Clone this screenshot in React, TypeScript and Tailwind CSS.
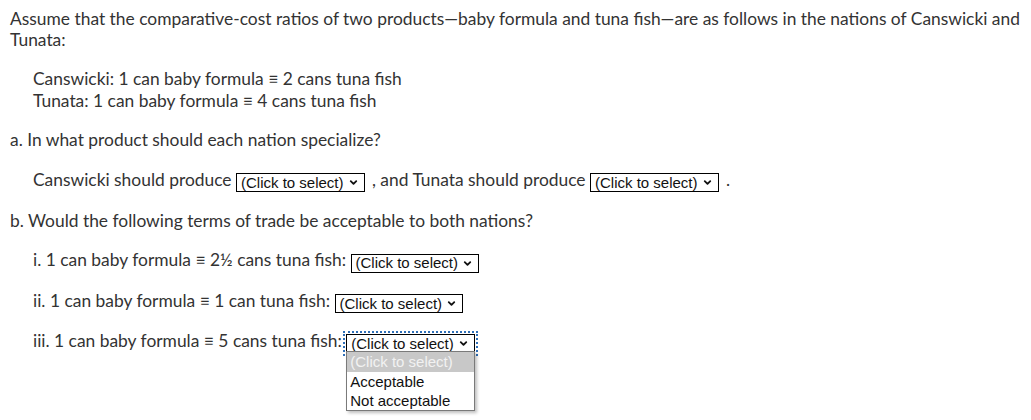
import { ChevronDown } from "lucide-react";

function Sel({ focused = false, open = false }: { focused?: boolean; open?: boolean }) {
  return (
    <span className="relative inline-block align-middle mr-[3px]">
      <span
        className={
          "inline-flex items-center gap-[4px] border border-black bg-white pl-[4px] pr-[5px] h-[19px] text-[15px] leading-[17px] text-[#111] font-['Liberation_Sans',Arial,sans-serif] " +
          (focused ? "outline-2 outline-dotted outline-[#2f6fb8] outline-offset-[1px]" : "")
        }
      >
        <span className="-mt-[1px]">(Click to select)</span>
        <ChevronDown className="w-[11px] h-[11px]" strokeWidth={4} />
      </span>
      {open && (
        <span className="absolute left-0 top-[19px] w-full flex flex-col border border-[#7a7a7a] bg-white shadow-[2px_2px_3px_rgba(0,0,0,0.25)] text-[15px] leading-[19px] text-[#111] font-['Liberation_Sans',Arial,sans-serif] z-10">
          <span className="bg-[#c8c8c8] text-[#f2f2f2] px-[3px] leading-[20px]">(Click to select)</span>
          <span className="px-[3px]">Acceptable</span>
          <span className="px-[3px]">Not acceptable</span>
        </span>
      )}
    </span>
  );
}

export default function App() {
  return (
    <div className="bg-white w-[1031px] h-[420px] px-[10px] pt-[8px] text-[17.4px] leading-[21px] text-[#333] font-['Lato',sans-serif]">
      <p>
        Assume that the comparative-cost ratios of two products—baby formula and tuna fish—are as follows in the nations of Canswicki and Tunata:
      </p>
      <div className="mt-[18px] pl-[23px] leading-[22px]">
        <div>Canswicki: 1 can baby formula ≡ 2 cans tuna fish</div>
        <div>Tunata: 1 can baby formula ≡ 4 cans tuna fish</div>
      </div>
      <p className="mt-[17px]">a. In what product should each nation specialize?</p>
      <p className="mt-[19px] pl-[23px]">
        Canswicki should produce <Sel /> , and Tunata should produce <Sel /> .
      </p>
      <p className="mt-[18px]">b. Would the following terms of trade be acceptable to both nations?</p>
      <div className="mt-[18px] pl-[23px] flex flex-col gap-[17px]">
        <div>
          i. 1 can baby formula ≡ 2½ cans tuna fish: <Sel />
        </div>
        <div>
          ii. 1 can baby formula ≡ 1 can tuna fish: <Sel />
        </div>
        <div>
          iii. 1 can baby formula ≡ 5 cans tuna fish: <Sel focused open />
        </div>
      </div>
    </div>
  );
}
